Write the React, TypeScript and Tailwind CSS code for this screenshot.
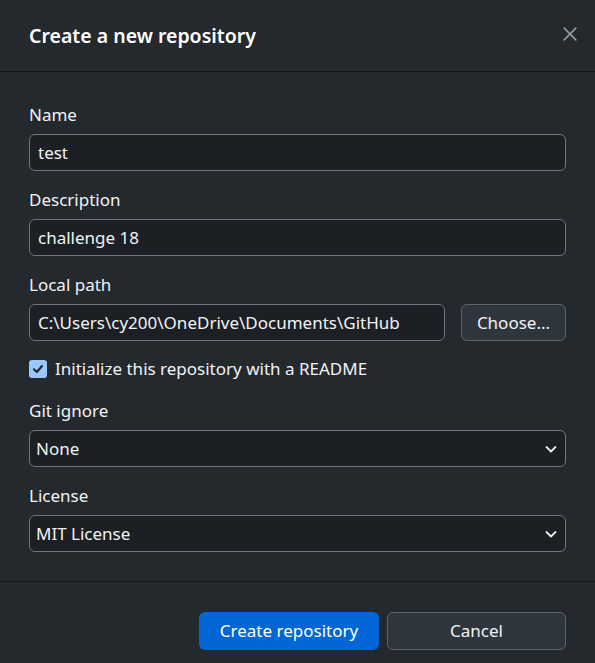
import { useState } from 'react';

const font = { fontFamily: '"Noto Sans", "Open Sans", sans-serif' };

function Label({ children }: { children: string }) {
  return <div className="h-[22px] mb-2 text-[17px] leading-[22px] text-[#f0f3f6]">{children}</div>;
}

function Chevron() {
  return (
    <svg width="14" height="14" viewBox="0 0 14 14" className="shrink-0">
      <path d="M2.5 5 L7 9.5 L11.5 5" fill="none" stroke="#e6edf3" strokeWidth="1.8" strokeLinecap="round" strokeLinejoin="round" />
    </svg>
  );
}

function Select({ value }: { value: string }) {
  return (
    <div className="h-[37px] rounded-md border border-[#6e7681] bg-[#1c1f24] pl-[6px] pr-[7px] flex items-center justify-between text-[17px] text-[#f0f3f6]">
      <span>{value}</span>
      <Chevron />
    </div>
  );
}

export default function App() {
  const [name, setName] = useState('test');
  const [desc, setDesc] = useState('challenge 18');
  const [path, setPath] = useState('C:\\Users\\cy200\\OneDrive\\Documents\\GitHub');
  const [readme, setReadme] = useState(true);

  const inputCls =
    'h-[37px] w-full rounded-md border border-[#6e7681] bg-[#1c1f24] px-2 text-[17px] text-[#f0f3f6] outline-none';

  return (
    <div className="w-[595px] h-[663px] bg-[#24292e] flex flex-col" style={font}>
      <div className="h-[72px] shrink-0 border-b border-[#141619] pl-[29px] pr-[17px] flex items-center justify-between">
        <h1 className="text-[19.5px] font-semibold text-white">Create a new repository</h1>
        <button className="text-[#9198a1] -mt-[3px]" aria-label="Close">
          <svg width="16" height="16" viewBox="0 0 16 16">
            <path d="M2.2 2.2 L13.8 13.8 M13.8 2.2 L2.2 13.8" stroke="currentColor" strokeWidth="1.7" strokeLinecap="round" />
          </svg>
        </button>
      </div>

      <div className="px-[29px] pt-[32px] pb-[29px] border-b border-[#141619]">
        <Label>Name</Label>
        <input className={inputCls} value={name} onChange={(e) => setName(e.target.value)} />
        <div className="h-[18px]" />
        <Label>Description</Label>
        <input className={inputCls} value={desc} onChange={(e) => setDesc(e.target.value)} />
        <div className="h-[18px]" />
        <Label>Local path</Label>
        <div className="flex gap-4">
          <input className={inputCls + ' flex-1'} value={path} onChange={(e) => setPath(e.target.value)} />
          <button className="h-[37px] w-[105px] shrink-0 rounded-md border border-[#5d646d] bg-[#2f353d] text-[17px] text-[#f0f3f6]">
            Choose...
          </button>
        </div>

        <label className="mt-4 mb-5 h-[23px] flex items-center gap-[8px] text-[17px] text-[#f0f3f6]">
          <span
            onClick={() => setReadme((r) => !r)}
            className={`w-[18px] h-[18px] rounded-[3px] flex items-center justify-center ${readme ? 'bg-[#99c8ff]' : 'border border-[#6e7681]'}`}
          >
            {readme && (
              <svg width="12" height="12" viewBox="0 0 12 12">
                <path d="M2 6.3 L4.8 9 L10 3" fill="none" stroke="#1c2128" strokeWidth="2" strokeLinecap="round" strokeLinejoin="round" />
              </svg>
            )}
          </span>
          Initialize this repository with a README
        </label>

        <Label>Git ignore</Label>
        <Select value="None" />
        <div className="h-[18px]" />
        <Label>License</Label>
        <Select value="MIT License" />
      </div>

      <div className="px-[29px] pt-[30px] flex justify-end gap-2">
        <button className="h-[38px] w-[180px] rounded-md bg-[#0366d6] text-[17px] text-white">Create repository</button>
        <button className="h-[38px] w-[179px] rounded-md border border-[#5d646d] bg-[#2f353d] text-[17px] text-[#f0f3f6]">
          Cancel
        </button>
      </div>
    </div>
  );
}
